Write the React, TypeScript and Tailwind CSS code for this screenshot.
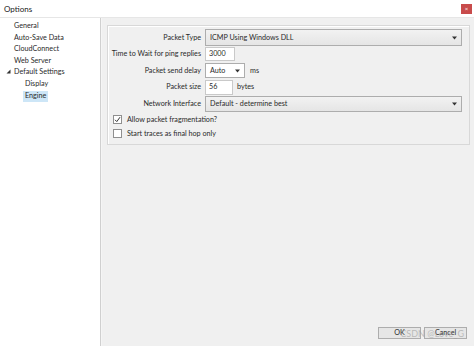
import React from "react";

const Caret = () => (
  <svg width="5" height="4" viewBox="0 0 5 4" className="shrink-0">
    <path d="M0 0.5 H5 L2.5 3.5 Z" fill="#333" />
  </svg>
);

const Select = ({ text, className }: { text: string; className: string }) => (
  <div
    className={`flex items-center justify-between border border-[#adadad] pl-[4px] pr-[4px] ${className}`}
  >
    <span>{text}</span>
    <Caret />
  </div>
);

const Label = ({ children }: { children: React.ReactNode }) => (
  <div className="w-[97px] shrink-0 whitespace-nowrap pr-[4px] text-right">{children}</div>
);

const Check = ({ checked, label }: { checked?: boolean; label: string }) => (
  <div className="flex h-[13px] items-center gap-[5px] pl-[5px]">
    <div className="flex h-[9px] w-[9px] items-center justify-center border border-[#8f8f8f] bg-white">
      {checked && (
        <svg width="7" height="7" viewBox="0 0 7 7">
          <path d="M1 3.8 L2.8 5.6 L6 1.2" stroke="#333" strokeWidth="1" fill="none" />
        </svg>
      )}
    </div>
    <span>{label}</span>
  </div>
);

export default function App() {
  return (
    <div
      className="flex h-[346px] w-[474px] flex-col bg-white text-[7.2px] leading-none text-[#2a2a2a]"
      style={{ fontFamily: 'Lato, "Noto Sans", sans-serif' }}
    >
      <div className="flex h-[17px] shrink-0 items-center justify-between pl-[4px] pr-[2px]">
        <span className="text-[8px] text-[#222]">Options</span>
        <div className="flex h-[10px] w-[11px] items-center justify-center bg-[#c84b4b]">
          <span className="text-[6px] leading-none text-white">×</span>
        </div>
      </div>
      <div className="flex flex-1 border-t border-[#e6e6e6]">
        <div className="flex w-[101px] shrink-0 flex-col border-r border-[#d0d0d0] bg-white pt-[4px]">
          <div className="h-[11.6px] pl-[14px]">General</div>
          <div className="h-[11.6px] pl-[14px]">Auto-Save Data</div>
          <div className="h-[11.6px] pl-[14px]">CloudConnect</div>
          <div className="h-[11.6px] pl-[14px]">Web Server</div>
          <div className="flex h-[11.6px] items-start pl-[6px]">
            <svg width="5" height="5" viewBox="0 0 5 5" className="mt-[1px] mr-[3px]">
              <path d="M4.5 0.5 V4.5 H0.5 Z" fill="#333" />
            </svg>
            Default Settings
          </div>
          <div className="h-[10.6px] pl-[25px]">Display</div>
          <div className="pl-[23px]">
            <span className="inline-block h-[11px] bg-[#cde6f7] px-[2px] pt-[1px]">Engine</span>
          </div>
        </div>
        <div className="flex flex-1 flex-col border-l border-[#f5f5f5] bg-[#f0f0f0] pl-[5px] pr-[4px] pt-[7px] pb-[3px]">
          <div className="border border-[#d8d8d8] shadow-[inset_1px_1px_0_#ffffff] pb-[4px] pt-[3px]">
            <div className="flex h-[17px] items-center">
              <Label>Packet Type</Label>
              <Select text="ICMP Using Windows DLL" className="h-[17px] w-[257px] bg-gradient-to-b from-[#f2f2f2] to-[#e5e5e5]" />
            </div>
            <div className="flex h-[16px] items-center">
              <Label>Time to Wait for ping replies</Label>
              <div className="flex h-[14px] w-[30px] items-center border border-[#c9c9c9] bg-white pl-[3px]">3000</div>
            </div>
            <div className="flex h-[17px] items-center">
              <Label>Packet send delay</Label>
              <Select text="Auto" className="h-[15px] w-[40px] bg-white" />
              <span className="pl-[5px]">ms</span>
            </div>
            <div className="flex h-[16px] items-center">
              <Label>Packet size</Label>
              <div className="flex h-[15px] w-[28px] items-center border border-[#c9c9c9] bg-white pl-[3px]">56</div>
              <span className="pl-[4px]">bytes</span>
            </div>
            <div className="flex h-[17px] items-center">
              <Label>Network Interface</Label>
              <Select text="Default - determine best" className="h-[16px] w-[257px] bg-gradient-to-b from-[#f2f2f2] to-[#e5e5e5]" />
            </div>
            <div className="mt-[1px]">
              <Check checked label="Allow packet fragmentation?" />
            </div>
            <div className="mt-[1px]">
              <Check label="Start traces as final hop only" />
            </div>
          </div>
          <div className="flex-1" />
          <div className="relative flex justify-end gap-[3px] pr-[3px] pb-[4px]">
            <div className="flex h-[12px] w-[43px] items-center justify-center border border-[#adadad] bg-[#e6e6e6]">
              OK
            </div>
            <div className="flex h-[12px] w-[43px] items-center justify-center border border-[#adadad] bg-[#e6e6e6]">
              Cancel
            </div>
            <span className="pointer-events-none absolute right-[6px] top-[2px] text-[9px] text-[#9a9a9a]/60">CSDN @Love_G</span>
          </div>
        </div>
      </div>
    </div>
  );
}
